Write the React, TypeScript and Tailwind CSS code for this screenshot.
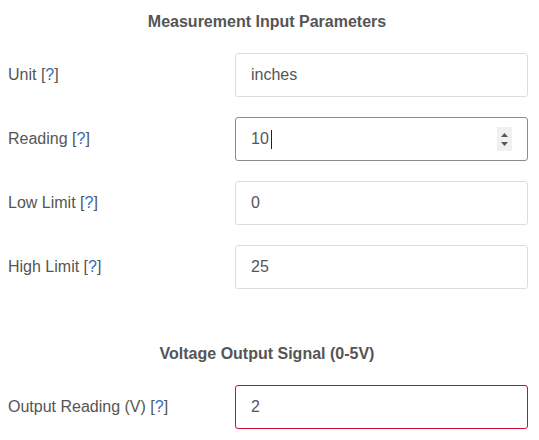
import { useState } from 'react';

// ── Field row ────────────────────────────────────────────────────────────────

type FieldProps = {
  label: string;
  value: string;
  variant?: 'default' | 'focused' | 'error';
};

const BORDER: Record<NonNullable<FieldProps['variant']>, string> = {
  default: 'border-[#dcdcdc]',
  focused: 'border-[#8c8c8c]',
  error: 'border-[#c8102e]',
};

function Field({ label, value, variant = 'default' }: FieldProps) {
  const [v, setV] = useState(value);
  return (
    <div className="flex items-center h-[44px]">
      <label className="w-[227px] text-[16px] text-[#555]">
        {label} <span>[<a className="text-[#2f6dc4]">?</a>]</span>
      </label>
      <div
        className={`relative w-[293px] h-[44px] rounded-[3px] border bg-white flex items-center ${BORDER[variant]}`}
      >
        <input
          value={v}
          onChange={(e) => setV(e.target.value)}
          className="w-full h-full bg-transparent pl-[15px] text-[16px] text-[#555] outline-none"
        />
        {variant === 'focused' && (
          <>
            {/* caret */}
            <span className="absolute left-[35px] top-[12px] w-px h-[19px] bg-[#222]" />
            {/* spinner */}
            <div className="absolute right-[15px] top-[9px] w-[15px] h-[24px] bg-[#f0f0f0] flex flex-col items-center justify-center gap-[5px]">
              <svg width="7" height="4" viewBox="0 0 7 4"><path d="M0 4 L3.5 0 L7 4 Z" fill="#555" /></svg>
              <svg width="7" height="4" viewBox="0 0 7 4"><path d="M0 0 L3.5 4 L7 0 Z" fill="#555" /></svg>
            </div>
          </>
        )}
      </div>
    </div>
  );
}

function Heading({ children }: { children: string }) {
  return (
    <h3 className="text-center pr-[13px] text-[16px] font-bold text-[#555] leading-[20px]">{children}</h3>
  );
}

// ── Page ─────────────────────────────────────────────────────────────────────

export default function App() {
  return (
    <div
      className="w-[539px] h-[440px] bg-white pl-[8px] pt-[12px] overflow-hidden"
      style={{ fontFamily: '"Liberation Sans", Arial, sans-serif' }}
    >
      <Heading>Measurement Input Parameters</Heading>
      <div className="mt-[21px] flex flex-col gap-[20px]">
        <Field label="Unit" value="inches" />
        <Field label="Reading" value="10" variant="focused" />
        <Field label="Low Limit" value="0" />
        <Field label="High Limit" value="25" />
      </div>
      <div className="mt-[55px]">
        <Heading>Voltage Output Signal (0-5V)</Heading>
      </div>
      <div className="mt-[21px]">
        <Field label="Output Reading (V)" value="2" variant="error" />
      </div>
    </div>
  );
}
